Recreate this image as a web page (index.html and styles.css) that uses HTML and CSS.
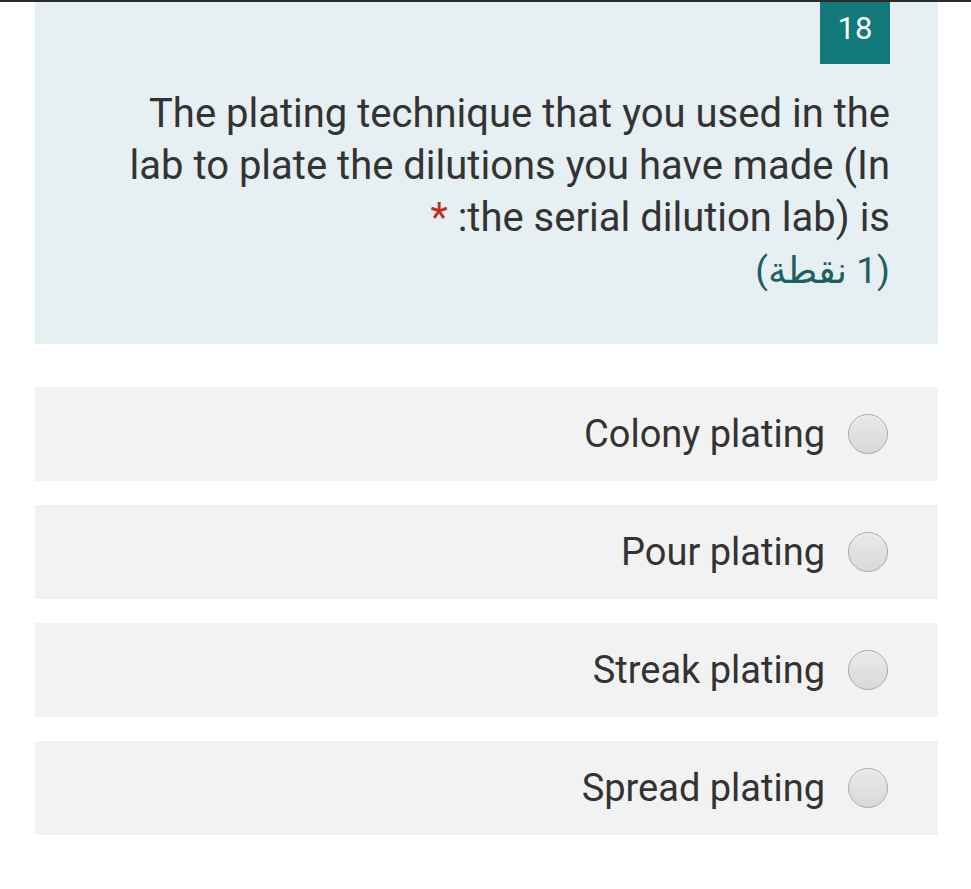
FILE: index.html
```html
<!DOCTYPE html>
<html lang="en">
<head>
<meta charset="utf-8">
<link rel="stylesheet" href="styles.css">
</head>
<body>
<div class="topbar"></div>
<div class="page">
  <section class="question">
    <div class="badge-row"><span class="badge">18</span></div>
    <div class="qtext">
      <div>The plating technique that you used in the</div>
      <div>lab to plate the dilutions you have made (In</div>
      <div><span class="req">*</span> :the serial dilution lab) is</div>
    </div>
    <div class="points" dir="rtl">(1 نقطة)</div>
  </section>
  <div class="options">
    <label class="option"><span class="otext">Colony plating</span><span class="radio"></span></label>
    <label class="option"><span class="otext">Pour plating</span><span class="radio"></span></label>
    <label class="option"><span class="otext">Streak plating</span><span class="radio"></span></label>
    <label class="option"><span class="otext">Spread plating</span><span class="radio"></span></label>
  </div>
</div>
</body>
</html>
```
FILE: styles.css
```css
html, body {
  margin: 0;
  padding: 0;
  background: #ffffff;
}
body {
  font-family: Roboto, "Noto Sans", "DejaVu Sans", sans-serif;
  color: #333333;
  width: 971px;
  height: 889px;
  overflow: hidden;
}
.topbar {
  height: 2px;
  background: #2b2b2b;
}
.page {
  padding: 0 33px 0 35px;
}
.question {
  background: #e6eff2;
  height: 342px;
  box-sizing: border-box;
  padding: 0 48px 0 0;
  display: flex;
  flex-direction: column;
  align-items: flex-end;
}
.badge-row {
  display: flex;
  justify-content: flex-end;
}
.badge {
  display: flex;
  align-items: center;
  justify-content: center;
  width: 70px;
  height: 62px;
  box-sizing: border-box;
  padding-bottom: 9px;
  background: #127a7a;
  color: #ffffff;
  font-size: 31px;
}
.qtext {
  margin-top: 24px;
  text-align: right;
  font-size: 40px;
  line-height: 52px;
  color: #333333;
}
.req {
  color: #b8321c;
}
.points {
  margin-top: 1px;
  font-size: 37px;
  line-height: 52px;
  color: #1f5f5f;
  font-family: Roboto, "DejaVu Sans", sans-serif;
}
.options {
  margin-top: 43px;
  display: flex;
  flex-direction: column;
  gap: 24px;
}
.option {
  height: 94px;
  background: #f2f2f2;
  display: flex;
  align-items: center;
  justify-content: flex-end;
  padding-right: 50px;
  gap: 23px;
}
.otext {
  font-size: 38px;
  color: #333333;
}
.radio {
  width: 38px;
  height: 38px;
  border-radius: 50%;
  border: 1px solid #a9a9a9;
  background: linear-gradient(#e9e9e9, #d9d9d9);
  box-shadow: inset 0 1px 1px rgba(255,255,255,0.6);
}
```
